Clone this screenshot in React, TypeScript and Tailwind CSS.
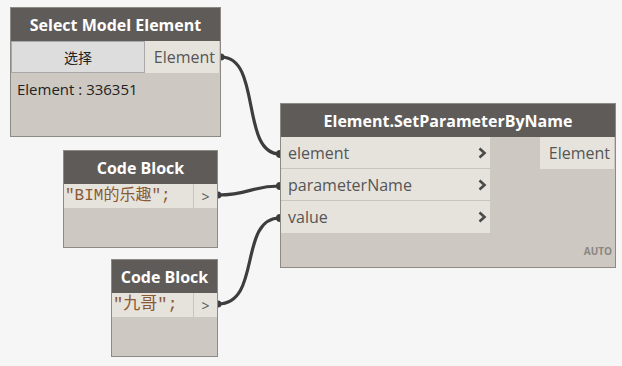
const ui = '[font-family:"Open_Sans","Noto_Sans","Noto_Sans_CJK_SC",sans-serif]'
const mono = '[font-family:"Liberation_Mono","DejaVu_Sans_Mono","Noto_Sans_CJK_SC",monospace]'

function Header({ title }: { title: string }) {
  return (
    <div className="h-[33px] bg-[#5e5b58] flex items-center justify-center text-white font-bold text-[16px] leading-none">
      {title}
    </div>
  )
}

function Chevron() {
  return (
    <svg width="9" height="12" viewBox="0 0 9 12" className="shrink-0">
      <path d="M1.5 1.5 L6.5 6 L1.5 10.5" fill="none" stroke="#4a4a4a" strokeWidth="2.6" />
    </svg>
  )
}

function CodeBlock({ code, className, size }: { code: string; className: string; size: string }) {
  return (
    <div className={`absolute flex flex-col bg-[#cdc8c1] border border-[#8d8a86] ${className}`}>
      <Header title="Code Block" />
      <div className="flex h-[24px] bg-[#e6e3dd]">
        <div className={`flex-1 flex items-center pl-[1px] text-[#8a5a35] ${size} ${mono}`}>{code}</div>
        <div className="w-[24px] border-l border-[#c8c4bd] flex items-center justify-center text-[14px] text-[#555]">&gt;</div>
      </div>
    </div>
  )
}

export default function App() {
  const inputs = ['element', 'parameterName', 'value']

  return (
    <div className={`relative w-[622px] h-[366px] overflow-hidden bg-[#f6f6f6] ${ui}`}>
      {/* wires */}
      <svg className="absolute inset-0" width="622" height="366">
        <g fill="none" stroke="#3d3d3d" strokeWidth="3.2">
          <path d="M221 57 C262 57, 240 154, 280 154" />
          <path d="M218 195 C250 195, 250 186, 280 186" />
          <path d="M218 304 C262 304, 238 218, 280 218" />
        </g>
        <g fill="#3d3d3d">
          <circle cx="221" cy="57" r="3.5" />
          <circle cx="218" cy="195" r="3.5" />
          <circle cx="218" cy="304" r="3.5" />
          <circle cx="280" cy="154" r="4" />
          <circle cx="280" cy="186" r="4" />
          <circle cx="280" cy="218" r="4" />
        </g>
      </svg>

      {/* Select Model Element */}
      <div className="absolute left-[10px] top-[7px] w-[211px] h-[130px] flex flex-col bg-[#cdc8c1] border border-[#8d8a86]">
        <Header title="Select Model Element" />
        <div className="flex h-[32px]">
          <div className="w-[134px] bg-[#dddddd] border border-[#a9a9a9] flex items-center justify-center text-[14px] text-[#222] [font-family:'Noto_Sans_CJK_SC',sans-serif]">
            选择
          </div>
          <div className="flex-1 bg-[#e6e3dd] flex items-center justify-end pr-[4px] text-[16px] text-[#555]">
            Element
          </div>
          <div className="w-[1px]" />
        </div>
        <div className="px-[6px] pt-[5px] text-[15px] text-[#222]">Element : 336351</div>
      </div>

      <CodeBlock code={'"BIM的乐趣";'} size="text-[16px]" className="left-[63px] top-[150px] w-[155px] h-[98px]" />
      <CodeBlock code={'"九哥";'} size="text-[17px]" className="left-[111px] top-[259px] w-[107px] h-[98px]" />

      {/* Element.SetParameterByName */}
      <div className="absolute left-[280px] top-[103px] w-[336px] h-[165px] flex flex-col bg-[#cdc8c1] border border-[#8d8a86]">
        <Header title="Element.SetParameterByName" />
        <div className="flex flex-1">
          <div className="w-[209px] flex flex-col self-start bg-[#e6e3dd]">
            {inputs.map((name, i) => (
              <div
                key={name}
                className={`h-[32px] flex items-center justify-between pl-[7px] pr-[3px] text-[16px] text-[#555] ${i < inputs.length - 1 ? 'border-b border-[#c9c5be]' : ''}`}
              >
                <span>{name}</span>
                <Chevron />
              </div>
            ))}
          </div>
          <div className="flex-1 flex flex-col items-end">
            <div className="w-[74px] h-[32px] bg-[#e6e3dd] flex items-center justify-end pr-[4px] text-[16px] text-[#555] mr-[1px]">
              Element
            </div>
            <div className="flex-1" />
            <div className="pr-[3px] pb-[8px] text-[10px] font-bold text-[#8a8783]">AUTO</div>
          </div>
        </div>
      </div>
    </div>
  )
}
